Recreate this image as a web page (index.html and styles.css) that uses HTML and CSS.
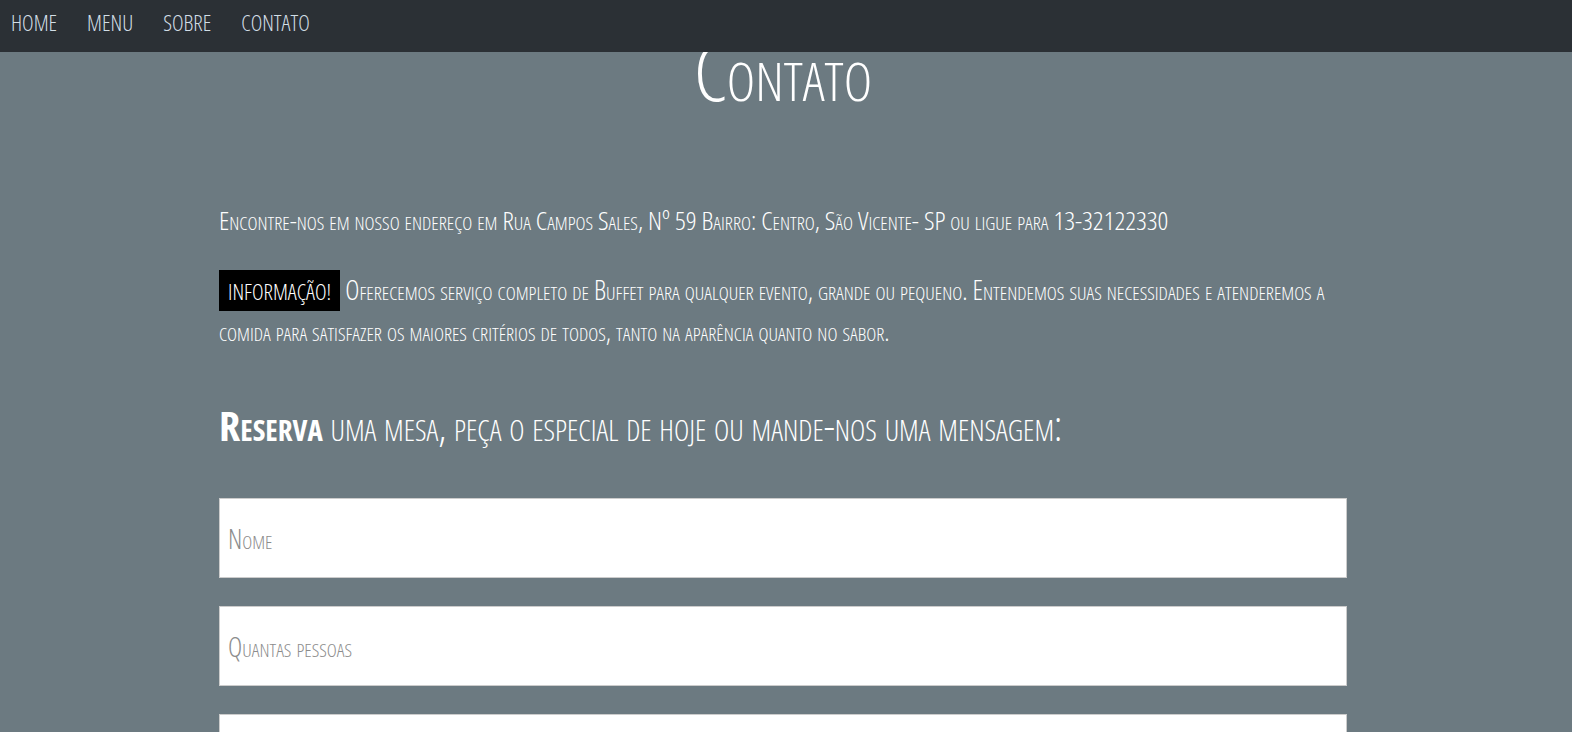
FILE: index.html
```html
<!DOCTYPE html>
<html lang="pt">
<head>
<meta charset="utf-8">
<title>Contato</title>
<link rel="stylesheet" href="styles.css">
</head>
<body>
<nav class="topbar">
  <a class="nav-link" href="#">Home</a>
  <a class="nav-link" href="#">Menu</a>
  <a class="nav-link" href="#">Sobre</a>
  <a class="nav-link" href="#">Contato</a>
</nav>
<main class="content">
  <h1 class="title">Contato</h1>
  <p class="address">Encontre-nos em nosso endereço em Rua Campos Sales, Nº 59 Bairro: Centro, São Vicente- SP ou ligue para 13-32122330</p>
  <p class="info"><span class="badge">Informação!</span> Oferecemos serviço completo de Buffet para qualquer evento, grande ou pequeno. Entendemos suas necessidades e atenderemos a comida para satisfazer os maiores critérios de todos, tanto na aparência quanto no sabor.</p>
  <h2 class="subtitle"><b class="strong">Reserva</b> uma mesa, peça o especial de hoje ou mande-nos uma mensagem:</h2>
  <form class="form">
    <input class="field" type="text" placeholder="Nome">
    <input class="field" type="text" placeholder="Quantas pessoas">
    <input class="field" type="text" placeholder="Data e hora">
  </form>
</main>
</body>
</html>
```
FILE: styles.css
```css
html, body {
  margin: 0;
  padding: 0;
}
body {
  background: #6c7a81;
  color: #ffffff;
  font-family: "Open Sans", "DejaVu Sans Condensed", sans-serif;
  font-stretch: 75%;
  font-weight: 300;
  font-variant: small-caps;
}
.topbar {
  position: fixed;
  top: 0;
  left: 0;
  right: 0;
  height: 52px;
  background: #2b3035;
  display: flex;
  align-items: center;
  padding-left: 11px;
  gap: 30px;
  z-index: 2;
}
.nav-link {
  color: #d2dee6;
  text-decoration: none;
  font-size: 22px;
  line-height: 28px;
  text-transform: uppercase;
  font-variant: normal;
  padding-bottom: 9px;
}
.content {
  width: 1128px;
  margin: 0 0 0 219px;
  padding-top: 31px;
}
.title {
  margin: 0;
  text-align: center;
  font-size: 77px;
  font-weight: 300;
  line-height: 82px;
}
.address {
  margin: 87px 0 0;
  font-size: 26.5px;
  line-height: 40px;
}
.info {
  margin: 30px 0 0;
  font-size: 27px;
  line-height: 40px;
}
.badge {
  background: #000;
  padding: 6px 9px 5px;
  text-transform: uppercase;
  font-variant: normal;
  font-size: 22px;
}
.subtitle {
  margin: 49px 0 0;
  font-size: 41.5px;
  font-weight: 300;
  line-height: 50px;
}
.strong {
  font-weight: 700;
}
.form {
  margin: 48px 0 0;
  display: flex;
  flex-direction: column;
  gap: 28px;
}
.field {
  width: 100%;
  height: 80px;
  box-sizing: border-box;
  border: 1px solid #cccccc;
  background: #ffffff;
  padding: 0 8px;
  font-family: inherit;
  font-stretch: 75%;
  font-weight: 300;
  font-variant: small-caps;
  font-size: 27px;
  color: #000;
}
.field::placeholder {
  color: #8c8c8c;
}
```
